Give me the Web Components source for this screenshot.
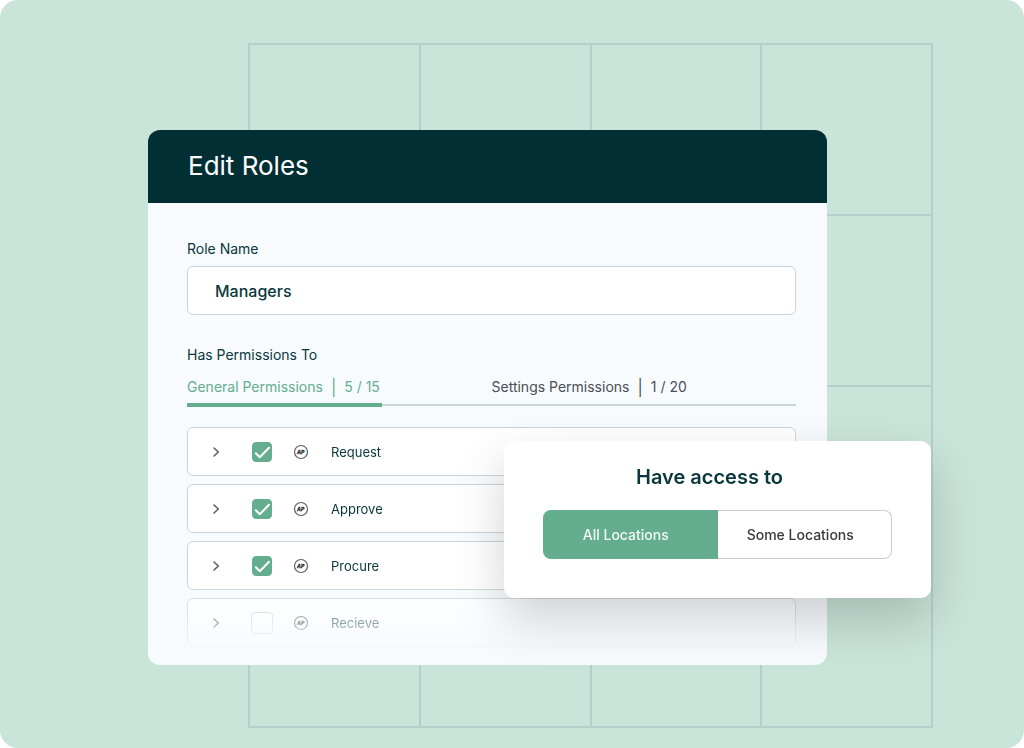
<!DOCTYPE html>
<html lang="en">
<head>
<meta charset="utf-8">
<meta name="viewport" content="width=device-width, initial-scale=1">
<title>Edit Roles</title>
<style>
  body { margin: 0; background: #fff; color: #0a373c; font: 14px/20px Inter, "Liberation Sans", sans-serif; }
</style>
</head>
<body>
<app-stage>
  <role-panel heading="Edit Roles">
    <text-field label="Role Name" value="Managers"></text-field>
    <permission-tabs label="Has Permissions To"></permission-tabs>
    <permission-list>
      <permission-row checked>Request</permission-row>
      <permission-row checked>Approve</permission-row>
      <permission-row checked>Procure</permission-row>
      <permission-row>Recieve</permission-row>
    </permission-list>
    <access-card slot="overlay" heading="Have access to"></access-card>
  </role-panel>
</app-stage>

<script>
const RESET = `*, *::before, *::after { box-sizing: border-box; }
  :host { display: block; box-sizing: border-box; }
  button, input { font: inherit; color: inherit; margin: 0; }
  button { padding: 0; border: 0; background: none; cursor: pointer; }
  h1, h2 { margin: 0; }`;

class Base extends HTMLElement {
  connectedCallback() {
    if (this.shadowRoot) return;
    this.attachShadow({ mode: "open" }).innerHTML = `<style>${RESET}${this.css()}</style>${this.html()}`;
  }
  attr(name) { return this.getAttribute(name) || ""; }
}

customElements.define("app-stage", class extends Base {
  css() { return `
    :host { position: relative; min-height: 100vh; padding: 130px 197px 83px 148px; border-radius: 18px; background: #c9e4d9; }
    .lattice { position: absolute; inset: 43px 91px 20px 248px; display: grid; grid-template: repeat(4, 1fr) / repeat(4, 1fr); gap: 2px; padding: 2px; background: #b5cfca; }
    .lattice i { background: #c9e4d9; }
    main { position: relative; }`; }
  html() { return `<div class="lattice" aria-hidden="true">${"<i></i>".repeat(16)}</div><main><slot></slot></main>`; }
});

customElements.define("role-panel", class extends Base {
  css() { return `
    :host { position: relative; border-radius: 12px; background: #f7fbfe; }
    header { padding: 20px 40px 21px; border-radius: 12px 12px 0 0; background: #022f34; color: #fff; }
    h1 { font-size: 26px; line-height: 32px; font-weight: 400; }
    .body { padding: 36px 31px 18px 39px; }
    .overlay { position: absolute; top: 311px; right: -104px; width: 427px; }`; }
  html() { return `<header><h1>${this.attr("heading")}</h1></header>
    <div class="body"><slot></slot></div><div class="overlay"><slot name="overlay"></slot></div>`; }
});

customElements.define("text-field", class extends Base {
  css() { return `
    label { display: block; margin-bottom: 7px; }
    input { display: block; width: 100%; height: 49px; padding: 0 27px; border: 1px solid #c8d5d8; border-radius: 6px; background: #fff; font-size: 16px; font-weight: 500; outline: none; }`; }
  html() { return `<label for="f">${this.attr("label")}</label><input id="f" type="text" value="${this.attr("value")}">`; }
});

customElements.define("permission-tabs", class extends Base {
  css() { return `
    :host { margin-top: 30px; }
    .tabs { display: grid; grid-template-columns: 1fr 1fr; height: 41px; border-bottom: 2px solid #c8d5d8; }
    button { display: flex; gap: 8px; justify-self: start; height: 42px; padding: 12px 2px 0 0; color: #4a4f55; white-space: nowrap; }
    button[aria-selected="true"] { color: #64ad8f; border-bottom: 4px solid #64ad8f; }
    .bar { font-size: 16px; }`; }
  html() { return `<div id="l">${this.attr("label")}</div>
    <div class="tabs" role="tablist" aria-labelledby="l">
      <button role="tab" aria-selected="true"><span>General Permissions</span><span class="bar">|</span><span>5 / 15</span></button>
      <button role="tab" aria-selected="false"><span>Settings Permissions</span><span class="bar">|</span><span>1 / 20</span></button>
    </div>`; }
});

customElements.define("permission-list", class extends Base {
  css() { return `
    :host { display: grid; gap: 8px; margin-top: 21px; -webkit-mask-image: linear-gradient(#000 70%, transparent 104%); mask-image: linear-gradient(#000 70%, transparent 104%); }`; }
  html() { return `<slot></slot>`; }
});

customElements.define("permission-row", class extends Base {
  css() { return `
    :host { display: flex; align-items: center; height: 49px; padding-left: 20px; border: 1px solid #c8d5d8; border-radius: 6px; background: #fff; }
    svg { display: block; fill: none; }
    label { display: flex; align-items: center; }
    .box { display: grid; width: 22px; height: 22px; margin: 0 20px 0 27px; place-items: center; }
    .box > * { grid-area: 1 / 1; }
    input { appearance: none; width: 22px; height: 22px; border: 1px solid #c8d5d8; border-radius: 4px; background: #fff; }
    input:checked { width: 20px; height: 20px; border-color: #64ad8f; background: #64ad8f; }
    .tick { pointer-events: none; visibility: hidden; }
    input:checked + .tick { visibility: visible; }
    .name { margin-left: 22px; font-size: 13px; }`; }
  html() { return `
    <button aria-label="Expand"><svg width="16" height="16" viewBox="0 0 16 16" stroke="#5c5f62" stroke-width="1.6" stroke-linecap="round" stroke-linejoin="round"><path d="M6 4l4.3 4L6 12"/></svg></button>
    <label>
      <span class="box"><input type="checkbox" ${this.hasAttribute("checked") ? "checked" : ""}>
        <svg class="tick" width="20" height="20" viewBox="0 0 20 20" stroke="#fff" stroke-width="2" stroke-linecap="round" stroke-linejoin="round"><path d="M3.8 11.2l4 4L17 5.8"/></svg></span>
      <svg width="16" height="16" viewBox="0 0 16 16" aria-hidden="true"><circle cx="8" cy="8" r="6.5" stroke="#5c5f62" stroke-width="1.2"/><text x="7.8" y="9.9" text-anchor="middle" font-size="5.2" font-weight="800" font-style="italic" fill="#33373a" stroke="#33373a" stroke-width=".3">AP</text></svg>
      <span class="name"><slot></slot></span>
    </label>`; }
});

customElements.define("access-card", class extends Base {
  css() { return `
    :host { padding: 24px 39px 39px; border-radius: 10px; background: #fff; box-shadow: 0 22px 50px rgba(0, 0, 0, .18); }
    h2 { padding-right: 16px; font-size: 20px; line-height: 25px; font-weight: 600; text-align: center; }
    .segments { display: grid; grid-template-columns: 1fr 1fr; height: 49px; margin-top: 20px; }
    button { padding-right: 8px; border: 1px solid #c9cccd; border-left: 0; border-radius: 0 8px 8px 0; color: #36393b; font-weight: 500; }
    button:first-child { border-color: #64ad8f; border-radius: 8px 0 0 8px; }
    button[aria-pressed="true"] { background: #64ad8f; color: #f0faf5; }`; }
  html() { return `<h2>${this.attr("heading")}</h2>
    <div class="segments" role="group" aria-label="${this.attr("heading")}">
      <button aria-pressed="true">All Locations</button><button aria-pressed="false">Some Locations</button>
    </div>`; }
});
</script>
</body>
</html>
